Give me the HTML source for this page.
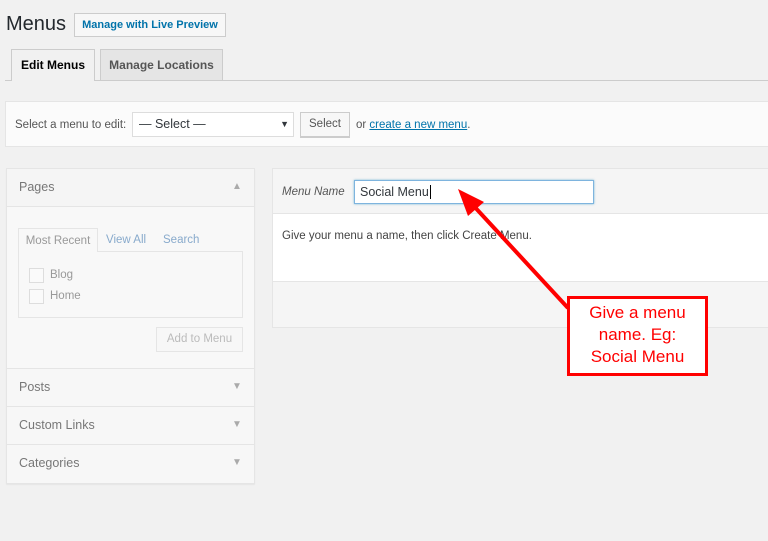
<!DOCTYPE html>
<html><head><meta charset="utf-8"><style>
*{box-sizing:border-box;margin:0;padding:0}
body{width:768px;height:541px;background:#f1f1f1;font-family:"Liberation Sans",sans-serif;position:relative;overflow:hidden;color:#444}
.a{position:absolute}
.t{font-size:11.5px;white-space:nowrap}
</style></head><body>
<div class="a" style="left:6px;top:13px;font-size:20px;color:#23282d">Menus</div>
<div class="a t" style="left:74px;top:13px;width:152px;height:24px;border:1px solid #ccc;background:#f7f7f7;color:#0073aa;font-weight:bold;font-size:11px;line-height:22px;text-align:center">Manage with Live Preview</div>
<div class="a" style="left:5px;top:80px;width:763px;height:1px;background:#ccc"></div>
<div class="a t" style="left:11px;top:49px;width:84px;height:32px;border:1px solid #ccc;border-bottom:none;background:#f1f1f1;color:#000;font-size:12px;font-weight:bold;line-height:31px;text-align:center">Edit Menus</div>
<div class="a t" style="left:100px;top:49px;width:123px;height:31px;border:1px solid #ccc;border-bottom:none;background:#e5e5e5;color:#555;font-size:12px;font-weight:bold;line-height:31px;text-align:center">Manage Locations</div>

<div class="a" style="left:5px;top:101px;width:770px;height:46px;background:#fbfbfb;border:1px solid #e5e5e5"></div>
<div class="a t" style="left:15px;top:119px;color:#555">Select a menu to edit:</div>
<div class="a t" style="left:132px;top:112px;width:162px;height:25px;background:#fff;border:1px solid #ddd;line-height:23px;padding-left:6px;color:#32373c;font-size:12.5px">— Select —<span style="position:absolute;right:4px;top:0;font-size:9px">▼</span></div>
<div class="a t" style="left:300px;top:112px;width:50px;height:25px;background:#f7f7f7;border:1px solid #ccc;line-height:23px;text-align:center;color:#555;box-shadow:0 1px 0 #ccc">Select</div>
<div class="a t" style="left:356px;top:119px;color:#555">or <span style="color:#0073aa;text-decoration:underline">create a new menu</span>.</div>

<div class="a" style="left:6px;top:168px;width:249px;height:316px;background:#fff;border:1px solid #e5e5e5;box-shadow:0 1px 1px rgba(0,0,0,.05)"></div>
<div class="a" style="left:7px;top:169px;width:247px;height:38px;background:#f5f5f5;border-bottom:1px solid #e5e5e5"></div>
<div class="a" style="left:7px;top:207px;width:247px;height:161px;background:#f8f8f8"></div>
<div class="a t" style="left:19px;top:180px;color:#777;font-size:12.5px">Pages</div>
<div class="a t" style="left:232px;top:181px;color:#aaa;font-size:10px">▲</div>
<div class="a" style="left:18px;top:251px;width:225px;height:67px;border:1px solid #e5e5e5"></div>
<div class="a t" style="left:18px;top:228px;width:80px;height:24px;border:1px solid #e5e5e5;border-bottom:none;background:#f8f8f8;color:#999;line-height:24px;text-align:center">Most Recent</div>
<div class="a t" style="left:106px;top:234px;color:#8ac">View All</div>
<div class="a t" style="left:163px;top:234px;color:#8ac">Search</div>
<div class="a" style="left:29px;top:268px;width:15px;height:15px;border:1px solid #ddd;background:#fafafa"></div>
<div class="a t" style="left:50px;top:269px;color:#999">Blog</div>
<div class="a" style="left:29px;top:289px;width:15px;height:15px;border:1px solid #ddd;background:#fafafa"></div>
<div class="a t" style="left:50px;top:290px;color:#999">Home</div>
<div class="a t" style="left:156px;top:327px;width:87px;height:25px;border:1px solid #e5e5e5;background:#f7f7f7;line-height:23px;text-align:center;color:#bbb">Add to Menu</div>
<div class="a" style="left:7px;top:368px;width:247px;height:115px;background:#f7f7f7"></div>
<div class="a" style="left:7px;top:368px;width:247px;height:1px;background:#e5e5e5"></div>
<div class="a" style="left:7px;top:406px;width:247px;height:1px;background:#e5e5e5"></div>
<div class="a" style="left:7px;top:444px;width:247px;height:1px;background:#e5e5e5"></div>
<div class="a t" style="left:19px;top:380px;color:#777;font-size:12.5px">Posts</div>
<div class="a t" style="left:19px;top:418px;color:#777;font-size:12.5px">Custom Links</div>
<div class="a t" style="left:19px;top:456px;color:#777;font-size:12.5px">Categories</div>
<div class="a t" style="left:232px;top:381px;color:#aaa;font-size:10px">▼</div>
<div class="a t" style="left:232px;top:419px;color:#aaa;font-size:10px">▼</div>
<div class="a t" style="left:232px;top:457px;color:#aaa;font-size:10px">▼</div>

<div class="a" style="left:272px;top:168px;width:500px;height:160px;background:#f5f5f5;border:1px solid #e5e5e5"></div>
<div class="a" style="left:273px;top:213px;width:500px;height:69px;background:#fff;border-top:1px solid #e5e5e5;border-bottom:1px solid #e5e5e5"></div>
<div class="a t" style="left:282px;top:186px;color:#555;font-style:italic">Menu Name</div>
<div class="a t" style="left:354px;top:180px;width:240px;height:24px;background:#fff;border:1px solid #7eb4de;box-shadow:0 0 2px rgba(30,140,190,.6);line-height:22px;padding-left:5px;color:#32373c;font-size:12.5px">Social Menu<span style="border-left:1px solid #000;margin-left:1px"></span></div>
<div class="a t" style="left:282px;top:230px;color:#444">Give your menu a name, then click Create Menu.</div>

<svg class="a" style="left:0;top:0" width="768" height="541">
<line x1="568" y1="308" x2="471" y2="203" stroke="#f00" stroke-width="4"/>
<polygon points="458,189 484,202 468,216" fill="#f00"/>
</svg>
<div class="a" style="left:567px;top:296px;width:141px;height:80px;background:#fff;border:3px solid #f00;color:#f00;font-size:17px;line-height:22px;text-align:center;padding-top:3px">Give a menu<br>name. Eg:<br>Social Menu</div>
</body></html>
